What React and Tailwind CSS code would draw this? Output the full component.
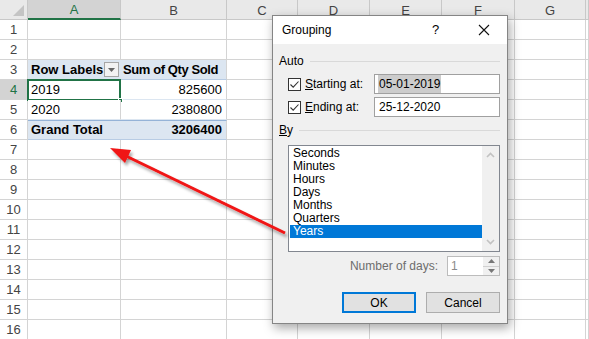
import { useState } from "react";

const gridCols = "grid-cols-[28px_93px_106px_71px_72px_72px_73px_71px_1fr]";
const letters = ["A", "B", "C", "D", "E", "F", "G", ""];

const pivot = {
  3: { a: "Row Labels", b: "Sum of Qty Sold", head: true },
  4: { a: "2019", b: "825600" },
  5: { a: "2020", b: "2380800" },
  6: { a: "Grand Total", b: "3206400", total: true },
};

const units = ["Seconds", "Minutes", "Hours", "Days", "Months", "Quarters", "Years"];

function Check() {
  return (
    <span className="w-[13px] h-[13px] border border-[#333] bg-white flex items-center justify-center">
      <svg width="11" height="11" viewBox="0 0 11 11">
        <path d="M1.5 5.5 L4.2 8.2 L9.5 2.5" fill="none" stroke="#333" strokeWidth="1.1" />
      </svg>
    </span>
  );
}

function Sheet() {
  const rows = Array.from({ length: 16 }, (_, i) => i + 1);
  return (
    <div className={`grid ${gridCols} text-[13px] text-black whitespace-nowrap`}>
      {/* column headers */}
      <div className="h-5 bg-[#e9e9e9] border-r border-b border-[#c8c8c8] relative">
        <svg className="absolute right-[3px] bottom-[3px]" width="11" height="11">
          <polygon points="11,0 11,11 0,11" fill="#c4c4c4" />
        </svg>
      </div>
      {letters.map((l) => (
        <div
          key={l || "x"}
          className={
            l === "A"
              ? "h-5 bg-[#d3d3d3] border-r border-[#c8c8c8] border-b-2 border-b-[#217346] flex items-center justify-center pt-[2px] text-[#217346]"
              : "h-5 bg-[#e9e9e9] border-r border-b border-[#c8c8c8] flex items-center justify-center pt-[2px] text-[#444]"
          }
        >
          {l}
        </div>
      ))}

      {rows.map((r) => {
        const p = pivot[r];
        return [
          <div
            key={`h${r}`}
            className={`h-5 border-r border-b border-[#d4d4d4] flex items-center justify-center ${
              r === 4 ? "bg-[#d3d3d3] text-[#217346]" : "bg-white text-[#444]"
            }`}
          >
            {r}
          </div>,
          <div
            key={`a${r}`}
            className={`h-5 relative flex items-center justify-between pl-[3px] pr-[2px] border-b ${
              p ? "" : "border-r"
            } ${
              p && (p.head || p.total)
                ? "bg-[#dce6f1] font-bold border-[#b8cce4]"
                : p
                ? "bg-white border-[#dce6f1] border-r border-r-[#d4d4d4]"
                : "bg-white border-[#d4d4d4]"
            } ${p && p.total ? "border-t border-t-[#95b3d7]" : ""}`}
          >
            {p ? <span>{p.a}</span> : null}
            {p && p.head ? (
              <span className="w-[15px] h-[15px] border border-[#a6a6a6] bg-[#f2f2f2] flex items-center justify-center">
                <svg width="7" height="4" viewBox="0 0 7 4">
                  <polygon points="0,0 7,0 3.5,4" fill="#666" />
                </svg>
              </span>
            ) : null}
            {r === 4 ? (
              <span className="absolute -left-[1px] -top-[1px] w-[94px] h-[22px] border-2 border-[#217346]">
                <span className="absolute -right-[4px] -bottom-[4px] w-[5px] h-[5px] bg-[#217346] border border-white" />
              </span>
            ) : null}
          </div>,
          <div
            key={`b${r}`}
            className={`h-5 flex items-center pr-[4px] border-r border-b ${
              p && p.head ? "justify-start pl-[2px] tracking-[-0.4px]" : "justify-end"
            } ${
              p && (p.head || p.total)
                ? "bg-[#dce6f1] font-bold border-b-[#b8cce4] border-r-[#d4d4d4]"
                : p
                ? "bg-white border-b-[#dce6f1] border-r-[#d4d4d4]"
                : "bg-white border-[#d4d4d4]"
            } ${p && p.total ? "border-t border-t-[#95b3d7]" : ""}`}
          >
            {p ? p.b : null}
          </div>,
          ...letters.slice(2).map((l) => (
            <div key={`${l}${r}`} className="h-5 bg-white border-r border-b border-[#d4d4d4]" />
          )),
        ];
      })}
    </div>
  );
}

function Dialog() {
  const [selected] = useState("Years");
  return (
    <div className="absolute left-[272px] top-[15px] w-[236px] h-[309px] border border-[#858585] bg-[#f0f0f0] shadow-[2px_4px_10px_rgba(0,0,0,0.35)] flex flex-col text-[12px] text-black">
      {/* title bar */}
      <div className="h-[28px] bg-white flex items-center pl-[9px]">
        <span className="flex-1">Grouping</span>
        <span className="w-[10px] text-[13px] mr-[36px]">?</span>
        <svg className="mr-[17px]" width="12" height="12" viewBox="0 0 12 12">
          <path d="M1 1 L11 11 M11 1 L1 11" stroke="#111" strokeWidth="1.1" />
        </svg>
      </div>

      <div className="flex flex-col pl-[6px] pr-[7px]">
        <div className="mt-[10px] h-[14px] flex items-center gap-[6px]">
          <span>Auto</span>
          <span className="flex-1 h-px bg-[#d9d9d9]" />
        </div>

        <div className="mt-[6px] h-[20px] flex items-center pl-[9px]">
          <Check />
          <span className="ml-[4px] w-[69px]">
            <span className="underline">S</span>tarting at:
          </span>
          <div className="flex-1 h-[20px] bg-white border border-[#a0a0a0] flex items-center pl-[3px]">
            <span className="bg-[#cccccc] px-[1px]">05-01-2019</span>
          </div>
        </div>

        <div className="mt-[3px] h-[20px] flex items-center pl-[9px]">
          <Check />
          <span className="ml-[4px] w-[69px]">
            <span className="underline">E</span>nding at:
          </span>
          <div className="flex-1 h-[20px] bg-white border border-[#a0a0a0] flex items-center pl-[4px]">
            25-12-2020
          </div>
        </div>

        <div className="mt-[6px] h-[14px] flex items-center gap-[6px]">
          <span>
            <span className="underline">B</span>y
          </span>
          <span className="flex-1 h-px bg-[#d9d9d9]" />
        </div>

        <div className="mt-[8px] ml-[9px] h-[107px] border border-[#828790] bg-white flex">
          <ul className="flex-1 pt-px pl-px leading-[13px]">
            {units.map((u) => (
              <li
                key={u}
                className={`h-[13px] pl-[3px] ${u === selected ? "bg-[#0078d7] text-white" : ""}`}
              >
                {u}
              </li>
            ))}
          </ul>
          <div className="w-[17px] bg-[#f0f0f0] flex flex-col justify-between items-center py-[6px]">
            <svg width="9" height="6" viewBox="0 0 9 6">
              <path d="M1 5 L4.5 1.5 L8 5" fill="none" stroke="#c2c2c2" strokeWidth="1.6" />
            </svg>
            <svg width="9" height="6" viewBox="0 0 9 6">
              <path d="M1 1 L4.5 4.5 L8 1" fill="none" stroke="#c2c2c2" strokeWidth="1.6" />
            </svg>
          </div>
        </div>

        <div className="mt-[4px] h-[20px] flex items-center justify-end">
          <span className="text-[#6d6d6d] mr-[9px]">Number of days:</span>
          <div className="w-[53px] h-[20px] border border-[#bcbcbc] flex">
            <span className="flex-1 bg-white text-[#8a8a8a] pl-[3px] flex items-center">1</span>
            <div className="w-[16px] bg-[#f0f0f0] flex flex-col">
              <span className="flex-1 flex items-center justify-center border-b border-[#d0d0d0]">
                <svg width="7" height="4" viewBox="0 0 7 4">
                  <polygon points="0,4 7,4 3.5,0" fill="#777" />
                </svg>
              </span>
              <span className="flex-1 flex items-center justify-center">
                <svg width="7" height="4" viewBox="0 0 7 4">
                  <polygon points="0,0 7,0 3.5,4" fill="#777" />
                </svg>
              </span>
            </div>
          </div>
        </div>

        <div className="mt-[16px] flex justify-end gap-[10px]">
          <button className="w-[74px] h-[21px] bg-[#e1e1e1] border-2 border-[#0078d7]">OK</button>
          <button className="w-[74px] h-[21px] bg-[#e1e1e1] border border-[#adadad]">Cancel</button>
        </div>
      </div>
    </div>
  );
}

function Arrow() {
  return (
    <svg className="absolute left-0 top-0 pointer-events-none" width="589" height="339">
      <defs>
        <filter id="sh" x="-20%" y="-20%" width="140%" height="140%">
          <feDropShadow dx="2" dy="3" stdDeviation="1.6" floodColor="#000" floodOpacity="0.35" />
        </filter>
      </defs>
      <g filter="url(#sh)">
        <line x1="285" y1="233" x2="126" y2="156" stroke="#f01414" strokeWidth="3" />
        <polygon points="110,148 131,150 125,163" fill="#f01414" />
      </g>
    </svg>
  );
}

export default function App() {
  return (
    <div className="relative w-[589px] h-[339px] overflow-hidden bg-white font-['Liberation_Sans',Arial,sans-serif]">
      <Sheet />
      <Dialog />
      <Arrow />
    </div>
  );
}
